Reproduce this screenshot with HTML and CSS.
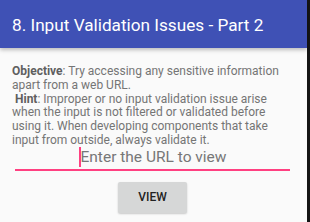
FILE: index.html
```html
<!DOCTYPE html>
<html lang="en">
<head>
    <meta charset="UTF-8">
    <meta name="viewport" content="width=device-width, initial-scale=1.0">
    <title>Input Validation Issues - Part 2</title>
    <link rel="stylesheet" href="styles.css">
</head>
<body>
    <div class="screen">
        <!-- Toolbar -->
        <div class="app-bar">
            <div class="app-title">8. Input Validation Issues - Part 2</div>
        </div>

        <div class="content">
            <p class="description">
                <b>Objective</b>: Try accessing any sensitive information apart from a web URL.<br>
                &nbsp;<b>Hint</b>: Improper or no input validation issue arise when the input is not filtered or validated before using it. When developing components that take input from outside, always validate it.
            </p>

            <!-- EditText -->
            <div class="url-field">
                <span class="caret"></span><span class="hint">Enter the URL to view</span>
            </div>

            <div class="actions">
                <button class="view-btn">VIEW</button>
            </div>
        </div>
    </div>
</body>
</html>
```

FILE: styles.css
```css
* {
    margin: 0;
    padding: 0;
    box-sizing: border-box;
}

html, body {
    background-color: #151515;
    height: 100%;
}

body {
    font-family: Roboto, "Noto Sans", sans-serif;
    overflow: hidden;
}

.screen {
    width: 307px;
    height: 222px;
    background-color: #fafafa;
}

.app-bar {
    height: 48px;
    background-color: #3f51b5;
    display: flex;
    align-items: center;
    padding-left: 12px;
    box-shadow: 0 2px 4px rgba(0, 0, 0, 0.25);
    position: relative;
}

.app-title {
    color: #fff;
    font-size: 17.2px;
    padding-top: 2px;
}

.content {
    padding: 17px 16px 0 12px;
}

.description {
    font-size: 12px;
    line-height: 13.8px;
    color: #757575;
}

.description b {
    color: #5f5f5f;
}

/* O nhap URL */
.url-field {
    display: flex;
    justify-content: center;
    align-items: flex-end;
    height: 23px;
    margin: 0 1px 0 3px;
    border-bottom: 2px solid #ff4081;
    padding-bottom: 3px;
}

.caret {
    width: 2px;
    height: 20px;
    background-color: #ff4081;
    margin-bottom: -1px;
}

.hint {
    font-size: 15.5px;
    line-height: 18px;
    color: #777;
}

.actions {
    display: flex;
    justify-content: center;
    padding-top: 11px;
    padding-left: 2px;
}

.view-btn {
    width: 69px;
    height: 31px;
    border: none;
    border-radius: 2px;
    background-color: #d6d7d7;
    color: #222;
    font-family: Roboto, sans-serif;
    font-size: 12px;
    font-weight: 500;
    box-shadow: 0 1px 2px rgba(0, 0, 0, 0.2);
}
```
